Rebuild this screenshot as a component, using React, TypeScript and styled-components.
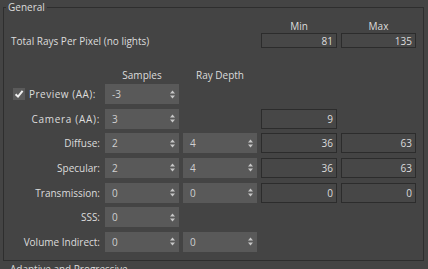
import React from "react";
import styled, { createGlobalStyle } from "styled-components";

const Global = createGlobalStyle`
  html, body { margin: 0; padding: 0; background: #444444; overflow: hidden; }
  body {
    font-family: "Open Sans", "Liberation Sans", sans-serif;
    font-size: 10px;
    color: #dcdcdc;
  }
`;

const Page = styled.div`
  width: 428px;
  height: 269px;
  box-sizing: border-box;
  padding: 0 4px 0 3px;
  background: #444444;
  overflow: hidden;
`;

const Group = styled.fieldset`
  margin: 0;
  padding: 0 6px 8px 0;
  border: 1px solid #2e2e2e;
  min-width: 0;
  box-sizing: border-box;
`;

const Legend = styled.legend<{ $indent: number }>`
  margin-left: ${(p) => p.$indent}px;
  padding: 0 2px;
  line-height: 15px;
  color: #dcdcdc;
`;

const Rows = styled.div`
  display: flex;
  flex-direction: column;
`;

const Row = styled.div<{ $h: number; $mt: number }>`
  display: grid;
  grid-template-columns: 97px 74px 74px 76px 75px;
  column-gap: 4px;
  height: ${(p) => p.$h}px;
  margin-top: ${(p) => p.$mt}px;
  align-items: center;
`;

const SpinRows = styled.div`
  display: flex;
  flex-direction: column;
  gap: 4.67px;
  margin-top: 4px;
`;

const ColHead = styled.div<{ $col: number }>`
  grid-column: ${(p) => p.$col};
  text-align: center;
  line-height: 14px;
  padding-top: 2px;
`;

const WideLabel = styled.div`
  grid-column: 1 / span 3;
  padding-left: 7px;
  line-height: 15px;
  padding-top: 2px;
  white-space: nowrap;
`;

const Label = styled.div<{ $wide?: boolean }>`
  grid-column: 1;
  display: flex;
  align-items: center;
  justify-content: flex-end;
  padding-right: 1px;
  white-space: nowrap;
  letter-spacing: ${(p) => (p.$wide ? "0.7px" : "0")};
`;

const CheckLabel = styled.div`
  grid-column: 1;
  display: flex;
  align-items: center;
  gap: 4px;
  padding-left: 9px;
  white-space: nowrap;
  letter-spacing: 0.5px;
`;

const Check = styled.span`
  width: 12px;
  height: 12px;
  box-sizing: border-box;
  background: #5a5a5a;
  display: flex;
  align-items: center;
  justify-content: center;
  letter-spacing: 0;
`;

const Spin = styled.div<{ $col: number }>`
  grid-column: ${(p) => p.$col};
  height: 20px;
  background: #595959;
  display: flex;
  align-items: center;
  justify-content: space-between;
  padding: 0 4px 0 7px;
  box-sizing: border-box;
  color: #d0d0d0;
`;

const ReadOnly = styled.div<{ $col: number; $h: number }>`
  grid-column: ${(p) => p.$col};
  height: ${(p) => p.$h}px;
  box-sizing: border-box;
  border: 1px solid #2c2c2c;
  background: #474747;
  display: flex;
  align-items: center;
  justify-content: flex-end;
  padding-right: 3px;
  color: #dcdcdc;
`;

const NextGroup = styled.fieldset`
  margin: 1px 0 0 0;
  padding: 0;
  border: 1px solid #2e2e2e;
  min-width: 0;
`;

const Arrows = () => (
  <svg width="5" height="9" viewBox="0 0 5 9">
    <path d="M0 3.5 L2.5 0.5 L5 3.5 Z" fill="#c8c8c8" />
    <path d="M0 5.5 L5 5.5 L2.5 8.5 Z" fill="#c8c8c8" />
  </svg>
);

const CheckMark = () => (
  <svg width="10" height="10" viewBox="0 0 10 10">
    <path d="M1.6 5.2 L4 7.6 L8.6 1.8" fill="none" stroke="#f0f0f0" strokeWidth="2" />
  </svg>
);

type SpinRow = {
  label: string;
  check?: boolean;
  wide?: boolean;
  samples: string;
  depth?: string;
  min?: string;
  max?: string;
};

const rows: SpinRow[] = [
  { label: "Preview (AA):", check: true, samples: "-3" },
  { label: "Camera (AA):", wide: true, samples: "3", min: "9" },
  { label: "Diffuse:", samples: "2", depth: "4", min: "36", max: "63" },
  { label: "Specular:", samples: "2", depth: "4", min: "36", max: "63" },
  { label: "Transmission:", samples: "0", depth: "0", min: "0", max: "0" },
  { label: "SSS:", samples: "0" },
  { label: "Volume Indirect:", samples: "0", depth: "0" },
];

export default function App() {
  return (
    <Page>
      <Global />
      <Group>
        <Legend $indent={2}>General</Legend>
        <Rows>
          <Row $h={14} $mt={2}>
            <ColHead $col={4}>Min</ColHead>
            <ColHead $col={5}>Max</ColHead>
          </Row>
          <Row $h={15} $mt={1}>
            <WideLabel>Total Rays Per Pixel (no lights)</WideLabel>
            <ReadOnly $col={4} $h={15}>81</ReadOnly>
            <ReadOnly $col={5} $h={15}>135</ReadOnly>
          </Row>
          <Row $h={14} $mt={19}>
            <ColHead $col={2}>Samples</ColHead>
            <ColHead $col={3}>Ray Depth</ColHead>
          </Row>
          <SpinRows>
            {rows.map((r) => (
              <Row key={r.label} $h={20} $mt={0}>
                {r.check ? (
                  <CheckLabel>
                    <Check>
                      <CheckMark />
                    </Check>
                    <span>{r.label}</span>
                  </CheckLabel>
                ) : (
                  <Label $wide={r.wide}>{r.label}</Label>
                )}
                <Spin $col={2}>
                  <span>{r.samples}</span>
                  <Arrows />
                </Spin>
                {r.depth !== undefined && (
                  <Spin $col={3}>
                    <span>{r.depth}</span>
                    <Arrows />
                  </Spin>
                )}
                {r.min !== undefined && (
                  <ReadOnly $col={4} $h={20}>{r.min}</ReadOnly>
                )}
                {r.max !== undefined && (
                  <ReadOnly $col={5} $h={20}>{r.max}</ReadOnly>
                )}
              </Row>
            ))}
          </SpinRows>
        </Rows>
      </Group>
      <NextGroup>
        <Legend $indent={4}>Adaptive and Progressive</Legend>
      </NextGroup>
    </Page>
  );
}
